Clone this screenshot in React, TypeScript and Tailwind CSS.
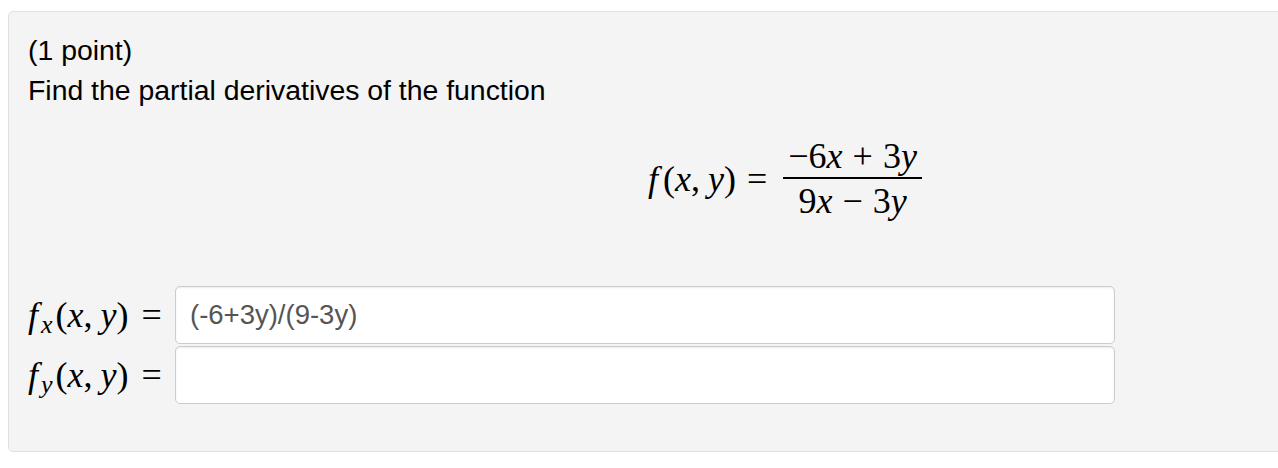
import React from 'react'

const sans = { fontFamily: '"Liberation Sans", Arial, sans-serif' }
const serif = { fontFamily: '"Liberation Serif", "Times New Roman", serif' }

function I({ children, className = '' }: { children: React.ReactNode; className?: string }) {
  return <span className={`italic ${className}`}>{children}</span>
}

function Args() {
  return (
    <>
      <span>(</span>
      <I>x</I>
      <span className="mr-[8px]">,</span>
      <I>y</I>
      <span>)</span>
    </>
  )
}

function AnswerRow({ sub, value }: { sub: string; value?: string }) {
  return (
    <div className="flex items-center">
      <div className="w-[147px] shrink-0 whitespace-nowrap text-[36px] leading-none text-black" style={serif}>
        <I className="mr-[3px]">f</I>
        <span className="relative top-[6px] mr-[3px] text-[26px] italic">{sub}</span>
        <Args />
        <span className="ml-[13px]">=</span>
      </div>
      <div className="flex h-[58px] w-[940px] items-center rounded-[5px] border border-[#cccccc] bg-white px-[14px] shadow-[inset_0_1px_2px_rgba(0,0,0,0.08)]">
        {value && (
          <span className="text-[27.5px] text-[#555555]" style={sans}>
            {value}
          </span>
        )}
      </div>
    </div>
  )
}

export default function App() {
  return (
    <div className="h-[468px] w-[1278px] overflow-hidden bg-white pl-[8px] pt-[11px]">
      <div className="h-[441px] w-[1290px] rounded-[5px] border border-[#e0e0e0] bg-[#f4f4f4] pl-[19px] pt-[18px]">
        <div className="text-[28.4px] leading-[40px] text-black" style={sans}>
          <div>(1 point)</div>
          <div>Find the partial derivatives of the function</div>
        </div>

        <div className="ml-[620px] mt-[28px] flex items-center text-[36px] leading-none text-black" style={serif}>
          <span className="whitespace-nowrap">
            <I className="mr-[5px]">f</I>
            <Args />
            <span className="ml-[11px] mr-[16px]">=</span>
          </span>
          <div className="flex flex-col items-center">
            <div className="whitespace-nowrap px-[5px] pb-[3px]">
              <span>−6</span>
              <I>x</I>
              <span className="mx-[10px]">+</span>
              <span>3</span>
              <I>y</I>
            </div>
            <div className="h-[2px] w-full bg-black" />
            <div className="whitespace-nowrap px-[5px] pt-[4px]">
              <span>9</span>
              <I>x</I>
              <span className="mx-[10px]">−</span>
              <span>3</span>
              <I>y</I>
            </div>
          </div>
        </div>

        <div className="mt-[67px] flex flex-col gap-[2px]">
          <AnswerRow sub="x" value="(-6+3y)/(9-3y)" />
          <AnswerRow sub="y" />
        </div>
      </div>
    </div>
  )
}
